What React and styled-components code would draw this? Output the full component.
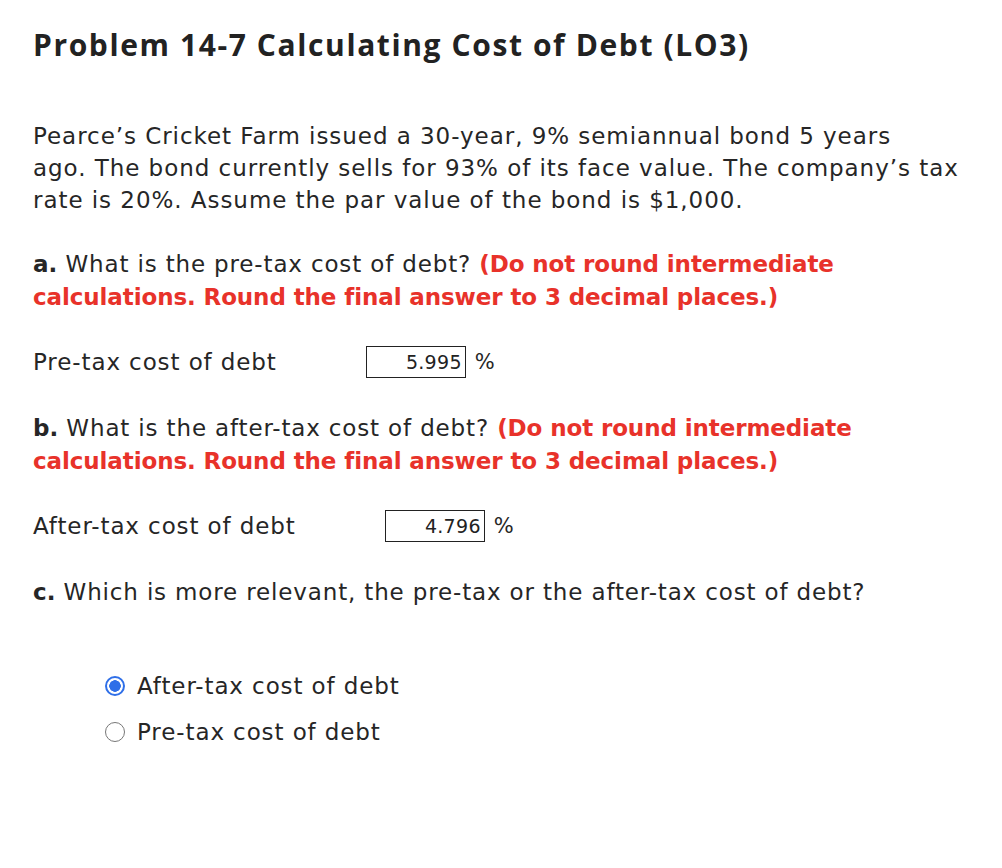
import React, { useState } from "react";
import styled, { createGlobalStyle } from "styled-components";

const GlobalStyle = createGlobalStyle`
  body {
    margin: 0;
    background: #fff;
    font-family: "DejaVu Sans", "Liberation Sans", sans-serif;
    color: #262626;
  }
`;

const App = () => {
  const [choice, setChoice] = useState("after");

  return (
    <Page>
      <GlobalStyle />
      <Title>Problem 14-7 Calculating Cost of Debt (LO3)</Title>
      <Intro>
        Pearce’s Cricket Farm issued a 30-year, 9% semiannual bond 5 years
        <br />
        ago. The bond currently sells for 93% of its face value. The company’s
        tax
        <br />
        rate is 20%. Assume the par value of the bond is $1,000.
      </Intro>

      <Question>
        <b>a.</b> What is the pre-tax cost of debt?{" "}
        <Hint>
          (Do not round intermediate
          <br />
          calculations. Round the final answer to 3 decimal places.)
        </Hint>
      </Question>
      <AnswerRow>
        <Label>Pre-tax cost of debt</Label>
        <AnswerBox>5.995</AnswerBox>
        <Unit>%</Unit>
      </AnswerRow>

      <Question>
        <b>b.</b> What is the after-tax cost of debt?{" "}
        <Hint>
          (Do not round intermediate
          <br />
          calculations. Round the final answer to 3 decimal places.)
        </Hint>
      </Question>
      <AnswerRow>
        <Label>After-tax cost of debt</Label>
        <AnswerBox>4.796</AnswerBox>
        <Unit>%</Unit>
      </AnswerRow>

      <Question>
        <b>c.</b> Which is more relevant, the pre-tax or the after-tax cost of
        debt?
      </Question>
      <Options>
        <Option onClick={() => setChoice("after")}>
          <Radio checked={choice === "after"} />
          After-tax cost of debt
        </Option>
        <Option onClick={() => setChoice("pre")}>
          <Radio checked={choice === "pre"} />
          Pre-tax cost of debt
        </Option>
      </Options>
    </Page>
  );
};

const Page = styled.div`
  padding: 26px 20px 40px 33px;
  width: 949px;
`;

const Title = styled.h1`
  margin: 0 0 56px;
  font-family: "Open Sans", "Liberation Sans", sans-serif;
  font-size: 30px;
  font-weight: 700;
  letter-spacing: 1.6px;
  color: #222;
  line-height: 38px;
`;

const Intro = styled.p`
  margin: 0 0 32px;
  font-size: 23px;
  line-height: 32px;
  letter-spacing: 0.95px;
  white-space: nowrap;
`;

const Question = styled.p`
  margin: 0 0 32px;
  font-size: 23px;
  line-height: 33px;
  letter-spacing: 0.85px;
  white-space: nowrap;
  b {
    font-weight: 700;
    letter-spacing: 0;
  }
`;

const Hint = styled.span`
  color: #e8322a;
  font-weight: 700;
  letter-spacing: -0.1px;
`;

const AnswerRow = styled.div`
  display: flex;
  align-items: center;
  margin: 0 0 34px;
  font-size: 23px;
  letter-spacing: 0.9px;
`;

const Label = styled.span`
  margin-right: 89px;
`;

const AnswerBox = styled.span`
  box-sizing: border-box;
  width: 100px;
  height: 32px;
  border: 1px solid #222;
  padding: 0 3px;
  text-align: right;
  font-size: 19px;
  line-height: 30px;
  letter-spacing: 0.3px;
  color: #222;
`;

const Unit = styled.span`
  margin-left: 9px;
  font-size: 21px;
  letter-spacing: 0;
`;

const Options = styled.div`
  display: flex;
  flex-direction: column;
  gap: 14px;
  margin: 61px 0 0 72px;
`;

const Option = styled.label`
  display: flex;
  align-items: center;
  gap: 12px;
  font-size: 23px;
  line-height: 32px;
  letter-spacing: 0.9px;
  cursor: pointer;
`;

const Radio = styled.span`
  box-sizing: border-box;
  width: 20px;
  height: 20px;
  border-radius: 50%;
  border: ${(p) => (p.checked ? "2px solid #2f6fe8" : "1.5px solid #777")};
  background: ${(p) =>
    p.checked ? "radial-gradient(circle, #2f6fe8 0 5.5px, #fff 6px)" : "#fff"};
`;

export default App;
